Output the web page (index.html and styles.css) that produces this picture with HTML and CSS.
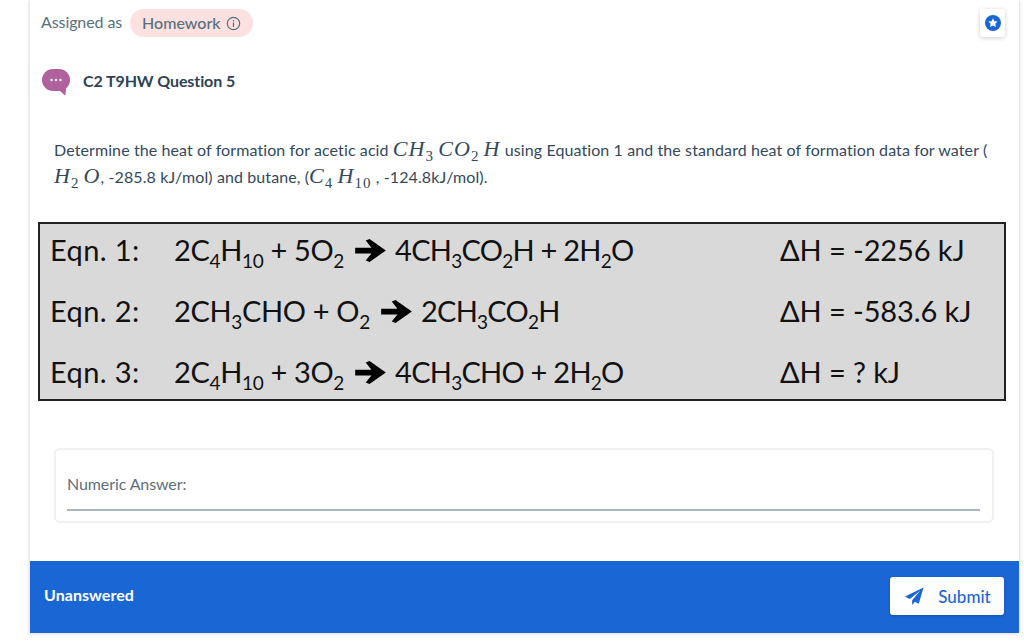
FILE: index.html
```html
<!DOCTYPE html>
<html lang="en">
<head>
    <meta charset="UTF-8">
    <title>C2 T9HW Question 5</title>
    <link rel="stylesheet" href="styles.css">
</head>
<body>

    <div class="card">
        <div class="top-row">
            <span class="assigned">Assigned as</span>
            <span class="pill">Homework
                <svg class="info-icon" viewBox="0 0 16 16" width="15" height="15">
                    <circle cx="8" cy="8" r="6.6" fill="none" stroke="currentColor" stroke-width="1.3"/>
                    <rect x="7.3" y="7" width="1.4" height="4.6" fill="currentColor"/>
                    <rect x="7.3" y="4.4" width="1.4" height="1.5" fill="currentColor"/>
                </svg>
            </span>
            <span class="star-btn">
                <svg viewBox="0 0 16 16" width="16" height="16">
                    <circle cx="8" cy="8" r="8" fill="#1a66d4"/>
                    <path d="M8 3.3l1.4 2.9 3.2.4-2.3 2.2.6 3.2L8 10.5l-2.9 1.5.6-3.2-2.3-2.2 3.2-.4z" fill="#fff"/>
                </svg>
            </span>
        </div>

        <div class="title-row">
            <svg class="bubble" viewBox="0 0 28 26" width="28" height="26">
                <rect x="0" y="0" width="28" height="22" rx="11" fill="#b0609c"/>
                <path d="M16 20h8l-.5 5.500c-.1.600-.6.700-1.100.4z" fill="#b0609c"/>
                <circle cx="9.500" cy="11" r="1.200" fill="#fff"/>
                <circle cx="14" cy="11" r="1.200" fill="#fff"/>
                <circle cx="18.500" cy="11" r="1.200" fill="#fff"/>
            </svg>
            <h1>C2 T9HW Question 5</h1>
        </div>

        <p class="question">Determine the heat of formation for acetic acid <span class="math"><i>CH</i><sub>3</sub><i class="gap">CO</i><sub>2</sub><i class="gap">H</i></span> using Equation 1 and the standard heat of formation data for water (<br><span class="math"><i>H</i><sub>2</sub><i class="gap">O</i></span>, -285.8 kJ/mol) and butane, (<span class="math"><i>C</i><sub>4</sub><i class="gap">H</i><sub>10</sub></span> , -124.8kJ/mol).</p>

        <div class="equations">
            <div class="eqn">
                <span class="eqn-name">Eqn. 1:</span>
                <span class="eqn-formula">2C<sub>4</sub>H<sub>10</sub> + 5O<sub>2</sub>
                    <svg class="arrow" viewBox="0 0 32 24"><path d="M0 9h17L11 1.500 15 0l17 12-17 12-4-1.500L17 15H0z" fill="#000"/></svg>
                    <span class="products">4CH<sub>3</sub>CO<sub>2</sub>H + 2H<sub>2</sub>O</span></span>
                <span class="eqn-dh">ΔH = -2256 kJ</span>
            </div>
            <div class="eqn">
                <span class="eqn-name">Eqn. 2:</span>
                <span class="eqn-formula">2CH<sub>3</sub>CHO + O<sub>2</sub>
                    <svg class="arrow" viewBox="0 0 32 24"><path d="M0 9h17L11 1.500 15 0l17 12-17 12-4-1.500L17 15H0z" fill="#000"/></svg>
                    <span class="products">2CH<sub>3</sub>CO<sub>2</sub>H</span></span>
                <span class="eqn-dh">ΔH = -583.6 kJ</span>
            </div>
            <div class="eqn">
                <span class="eqn-name">Eqn. 3:</span>
                <span class="eqn-formula">2C<sub>4</sub>H<sub>10</sub> + 3O<sub>2</sub>
                    <svg class="arrow" viewBox="0 0 32 24"><path d="M0 9h17L11 1.500 15 0l17 12-17 12-4-1.500L17 15H0z" fill="#000"/></svg>
                    <span class="products">4CH<sub>3</sub>CHO + 2H<sub>2</sub>O</span></span>
                <span class="eqn-dh">ΔH = ? kJ</span>
            </div>
        </div>

        <div class="answer-box">
            <div class="answer-field">Numeric Answer:</div>
        </div>

        <div class="footer">
            <span class="status">Unanswered</span>
            <button class="submit">
                <svg viewBox="0 0 20 20" width="19" height="19">
                    <path d="M19.500 .5L0 10l5 2.500L16 4 7.500 14v5l3-3.500 4 2z" fill="#1a66d4"/>
                </svg>
                Submit
            </button>
        </div>
    </div>

</body>
</html>
```

FILE: styles.css
```css
html, body {
    margin: 0;
    padding: 0;
    height: 100%;
    overflow: hidden;
    background: #fff;
    font-family: Lato, "Noto Sans", Arial, sans-serif;
    color: #34495e;
}

.card {
    width: 989px;
    height: 633px;
    margin-left: 30px;
    box-shadow: 0 0 4px rgba(0, 0, 0, 0.22);
    background: #fff;
    display: flex;
    flex-direction: column;
}

.top-row {
    display: flex;
    align-items: center;
    height: 28px;
    margin-top: 9px;
    padding: 0 14px 0 11px;
}

.assigned {
    font-size: 16px;
    line-height: 26px;
    margin-bottom: 2px;
    color: #56707f;
    letter-spacing: -0.1px;
}

.pill {
    display: flex;
    align-items: center;
    gap: 5px;
    height: 28px;
    box-sizing: border-box;
    margin-left: 8px;
    padding: 0 12px 2px 12px;
    border-radius: 14px;
    background: #fde0e0;
    color: #56707f;
    font-size: 16px;
    font-weight: 500;
}

.info-icon {
    margin-top: 2px;
}

.star-btn {
    margin-left: auto;
    width: 25px;
    height: 28px;
    display: flex;
    align-items: center;
    justify-content: center;
    background: #fff;
    border-radius: 3px;
    box-shadow: 0 1px 4px rgba(0, 0, 0, 0.2);
}

.title-row {
    display: flex;
    align-items: center;
    gap: 13px;
    margin-top: 32px;
    padding-left: 12px;
    height: 26px;
}

h1 {
    margin: 0 0 3px;
    font-size: 16px;
    font-weight: 700;
    color: #2c4355;
    letter-spacing: -0.1px;
}

.question {
    margin: 41px 0 0 24px;
    font-size: 16px;
    line-height: 26px;
    color: #34495e;
    letter-spacing: 0.1px;
    white-space: nowrap;
}

.math {
    font-family: "Liberation Serif", serif;
    font-size: 22px;
    letter-spacing: 1.1px;
}

.math sub {
    font-size: 15px;
    line-height: 0;
}

.gap {
    margin-left: 4px;
}

.equations {
    box-sizing: border-box;
    width: 968px;
    height: 180px;
    margin: 32px 0 0 8px;
    padding: 0 11px 3px;
    border: 2px solid #222;
    background: #d9d9d9;
    color: #111;
    font-family: Lato, "Noto Sans", sans-serif;
    font-size: 29px;
    display: flex;
    flex-direction: column;
    justify-content: center;
    gap: 21px;
}

.eqn {
    display: grid;
    grid-template-columns: 123px 606px 1fr;
    align-items: center;
    height: 40px;
    white-space: nowrap;
}

.eqn-name {
    margin-left: -1px;
    letter-spacing: 0.4px;
}

.eqn-formula {
    letter-spacing: -0.35px;
}

.products {
    letter-spacing: -0.75px;
}

.eqn-dh {
    letter-spacing: -0.1px;
}

.eqn sub {
    font-size: 19px;
    line-height: 0;
}

.arrow {
    width: 31px;
    height: 23px;
    margin: 0 2px 0 4px;
    vertical-align: -1px;
}

.answer-box {
    box-sizing: border-box;
    width: 940px;
    height: 75px;
    margin: 47px 0 0 24px;
    padding: 0 12px 0 11px;
    border: 2px solid #eff1f3;
    border-radius: 6px;
    display: flex;
}

.answer-field {
    flex: 1;
    height: 59px;
    line-height: 68px;
    border-bottom: 2px solid #a9b5bf;
    font-size: 16px;
    color: #5f6f7a;
    letter-spacing: -0.1px;
}

.footer {
    margin-top: 38px;
    height: 72px;
    background: #1a66d4;
    display: flex;
    align-items: center;
    justify-content: space-between;
    padding: 0 15px 2px 14px;
    box-sizing: border-box;
}

.status {
    margin-bottom: 3px;
    color: #fff;
    font-size: 16px;
    font-weight: 700;
    letter-spacing: 0.05px;
}

.submit {
    width: 114px;
    height: 38px;
    padding: 0 0 0 2px;
    border: none;
    border-radius: 3px;
    background: #fff;
    color: #1a66d4;
    font-family: inherit;
    font-size: 17px;
    font-weight: 500;
    display: flex;
    align-items: center;
    justify-content: center;
    gap: 14px;
    box-shadow: 0 1px 3px rgba(0, 0, 0, 0.2);
}
```
